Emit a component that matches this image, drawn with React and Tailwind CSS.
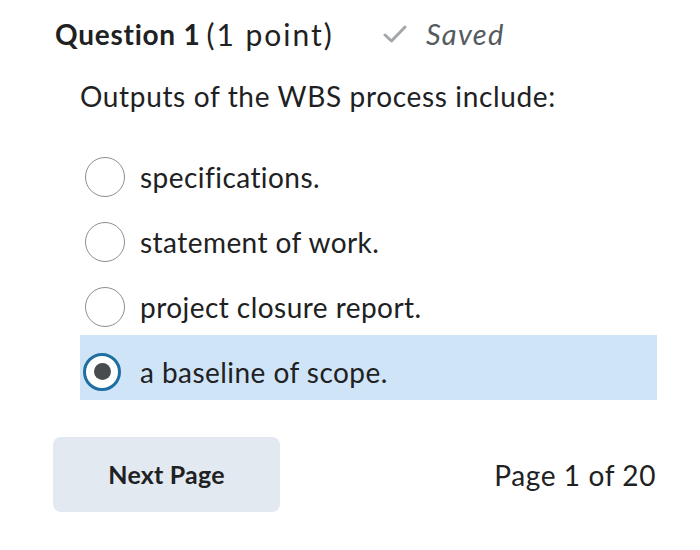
import React, { useState } from 'react';

const options = [
  'specifications.',
  'statement of work.',
  'project closure report.',
  'a baseline of scope.',
];

const Radio = ({ checked }) =>
  checked ? (
    <span className="w-[38px] h-[38px] -ml-[2px] mr-[4px] rounded-full border-[3px] border-[#1f6fa3] bg-white flex items-center justify-center shrink-0">
      <span className="w-[17px] h-[17px] rounded-full bg-[#494c4e]" />
    </span>
  ) : (
    <span className="w-[40px] h-[40px] rounded-full border-[1.5px] border-[#8b8e91] bg-white shrink-0" />
  );

const App = () => {
  const [selected, setSelected] = useState(3);

  return (
    <div className="w-[700px] h-[550px] bg-white text-[#202122] font-['Lato','Liberation_Sans',sans-serif] [font-variant-ligatures:none] overflow-hidden">
      <div className="pl-[55px] pt-[14px]">
        <div className="flex items-center h-[40px]">
          <span className="text-[28px] font-bold tracking-[0.75px]">Question 1</span>
          <span className="text-[30px] ml-[6px] tracking-[2px]">(1 point)</span>
          <svg className="ml-[49px]" width="24" height="20" viewBox="0 0 24 20">
            <path d="M2 11 L8.5 17 L22 3" fill="none" stroke="#a3a6aa" strokeWidth="3" strokeLinecap="round" strokeLinejoin="round" />
          </svg>
          <span className="text-[29px] italic text-[#555a5e] ml-[19px] tracking-[1.3px]">Saved</span>
        </div>

        <div className="pl-[25px] mt-[22px] text-[28px] leading-[40px] tracking-[0.65px]">Outputs of the WBS process include:</div>

        <div className="mt-[28px] ml-[25px] w-[577px] flex flex-col">
          {options.map((o, i) => (
            <button
              key={o}
              onClick={() => setSelected(i)}
              className={`h-[65px] flex items-center gap-[15px] pl-[5px] text-left ${selected === i ? 'bg-[#d0e4f7] -mt-[4px] pt-[8px]' : ''}`}
            >
              <Radio checked={selected === i} />
              <span className="text-[28px] tracking-[0.45px]">{o}</span>
            </button>
          ))}
        </div>

        <div className="mt-[37px] -ml-[2px] flex items-center justify-between pr-[44px]">
          <button className="w-[227px] h-[75px] rounded-lg bg-[#e3e9f1] text-[25px] font-bold text-[#202122] tracking-[0.2px]">
            Next Page
          </button>
          <span className="text-[28px] tracking-[0.6px]">Page 1 of 20</span>
        </div>
      </div>
    </div>
  );
};

export default App;
